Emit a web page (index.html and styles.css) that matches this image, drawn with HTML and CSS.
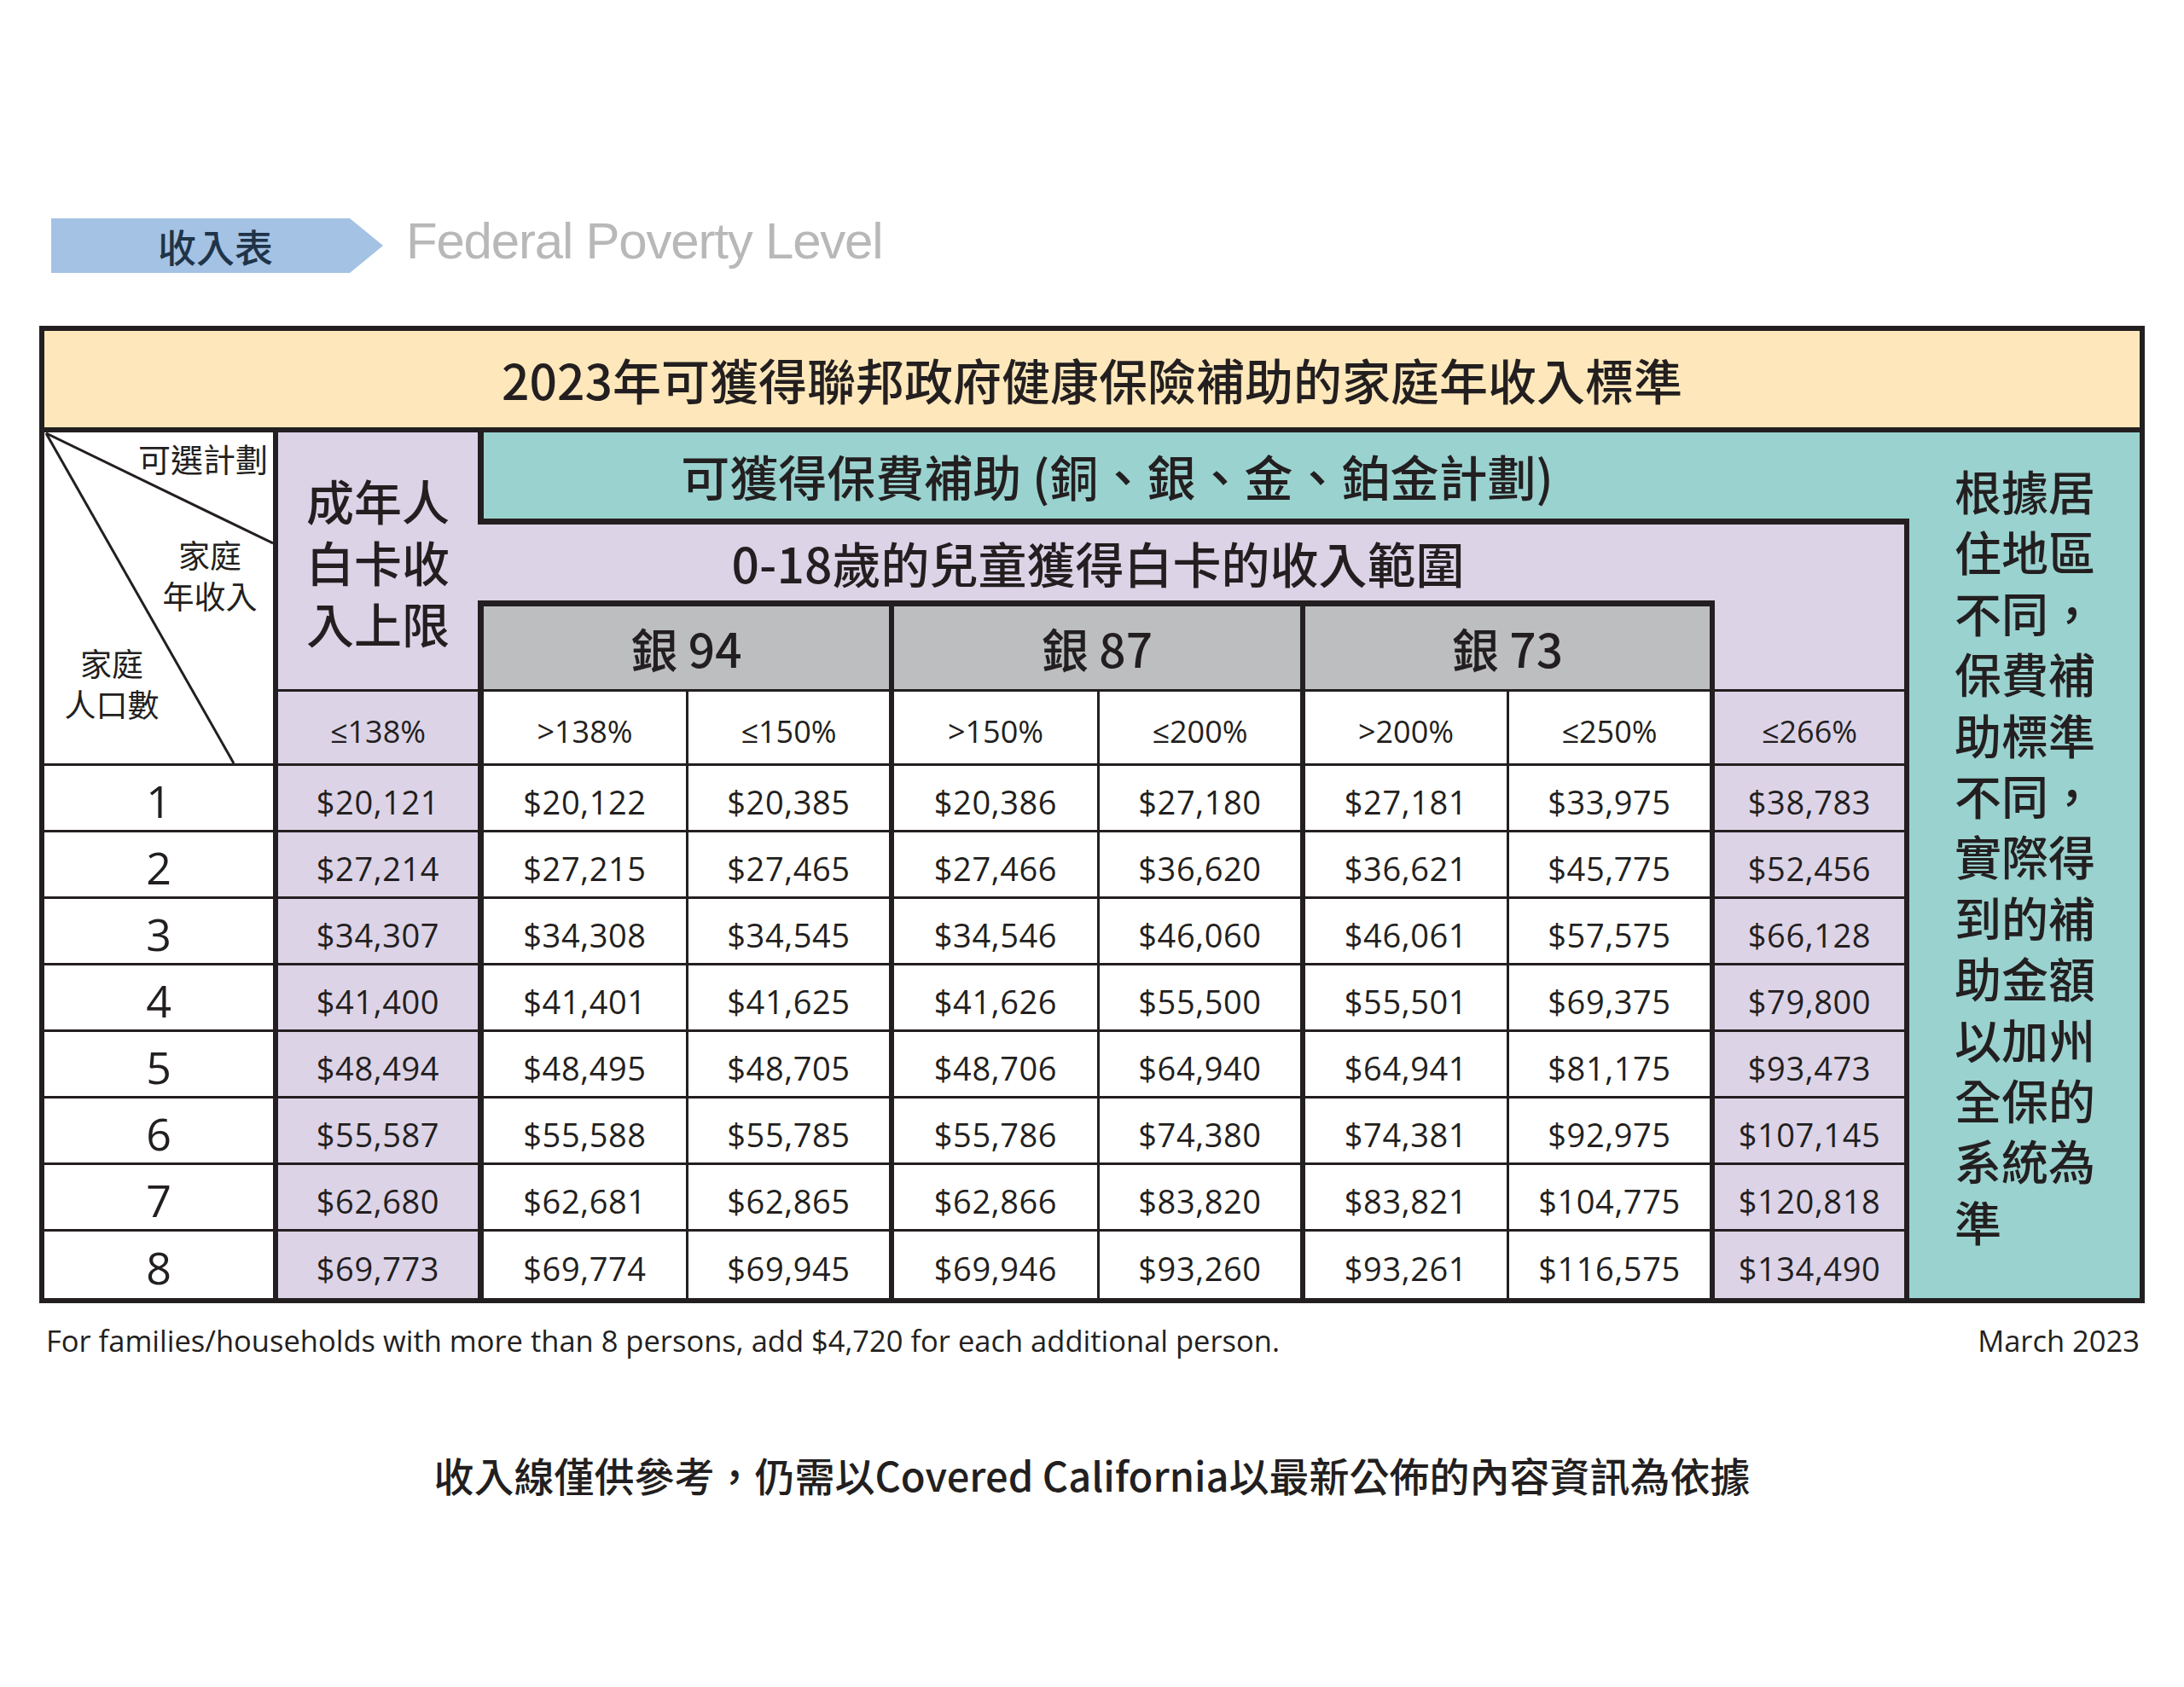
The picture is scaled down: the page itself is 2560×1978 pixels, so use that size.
FILE: index.html
```html
<!DOCTYPE html>
<html lang="zh-Hant">
<head>
<meta charset="utf-8">
<title>收入表 Federal Poverty Level</title>
<link rel="stylesheet" href="styles.css">
</head>
<body>
<div class="page">
  <div class="heading">
    <div class="tag">收入表</div>
    <div class="fpl">Federal Poverty Level</div>
  </div>

  <div class="fpl-table">
    <div class="title">2023年可獲得聯邦政府健康保險補助的家庭年收入標準</div>

    <div class="diag">
      <svg class="diag-lines" viewBox="0 0 268 388" preserveAspectRatio="none">
        <line x1="2" y1="1" x2="268" y2="130"></line>
        <line x1="2" y1="1" x2="222" y2="388"></line>
      </svg>
      <div class="lbl lbl-plan">可選計劃</div>
      <div class="lbl lbl-income">家庭<br>年收入</div>
      <div class="lbl lbl-size">家庭<br>人口數</div>
    </div>

    <div class="adult">成年人<br>白卡收<br>入上限</div>
    <div class="teal-band">可獲得保費補助 (銅、銀、金、鉑金計劃)</div>
    <div class="side">根據居<br>住地區<br>不同，<br>保費補<br>助標準<br>不同，<br>實際得<br>到的補<br>助金額<br>以加州<br>全保的<br>系統為<br>準</div>
    <div class="kids-band">0-18歲的兒童獲得白卡的收入範圍</div>
    <div class="silver s94">銀 94</div>
    <div class="silver s87">銀 87</div>
    <div class="silver s73">銀 73</div>
    <div class="kids-tail"></div>

    <div class="sub c1">≤138%</div>
    <div class="sub c2">&gt;138%</div>
    <div class="sub c3">≤150%</div>
    <div class="sub c4">&gt;150%</div>
    <div class="sub c5">≤200%</div>
    <div class="sub c6">&gt;200%</div>
    <div class="sub c7">≤250%</div>
    <div class="sub c8">≤266%</div>

    <div class="cell n">1</div><div class="cell c1">$20,121</div><div class="cell c2">$20,122</div><div class="cell c3">$20,385</div><div class="cell c4">$20,386</div><div class="cell c5">$27,180</div><div class="cell c6">$27,181</div><div class="cell c7">$33,975</div><div class="cell c8">$38,783</div>
    <div class="cell n">2</div><div class="cell c1">$27,214</div><div class="cell c2">$27,215</div><div class="cell c3">$27,465</div><div class="cell c4">$27,466</div><div class="cell c5">$36,620</div><div class="cell c6">$36,621</div><div class="cell c7">$45,775</div><div class="cell c8">$52,456</div>
    <div class="cell n">3</div><div class="cell c1">$34,307</div><div class="cell c2">$34,308</div><div class="cell c3">$34,545</div><div class="cell c4">$34,546</div><div class="cell c5">$46,060</div><div class="cell c6">$46,061</div><div class="cell c7">$57,575</div><div class="cell c8">$66,128</div>
    <div class="cell n">4</div><div class="cell c1">$41,400</div><div class="cell c2">$41,401</div><div class="cell c3">$41,625</div><div class="cell c4">$41,626</div><div class="cell c5">$55,500</div><div class="cell c6">$55,501</div><div class="cell c7">$69,375</div><div class="cell c8">$79,800</div>
    <div class="cell n">5</div><div class="cell c1">$48,494</div><div class="cell c2">$48,495</div><div class="cell c3">$48,705</div><div class="cell c4">$48,706</div><div class="cell c5">$64,940</div><div class="cell c6">$64,941</div><div class="cell c7">$81,175</div><div class="cell c8">$93,473</div>
    <div class="cell n">6</div><div class="cell c1">$55,587</div><div class="cell c2">$55,588</div><div class="cell c3">$55,785</div><div class="cell c4">$55,786</div><div class="cell c5">$74,380</div><div class="cell c6">$74,381</div><div class="cell c7">$92,975</div><div class="cell c8">$107,145</div>
    <div class="cell n">7</div><div class="cell c1">$62,680</div><div class="cell c2">$62,681</div><div class="cell c3">$62,865</div><div class="cell c4">$62,866</div><div class="cell c5">$83,820</div><div class="cell c6">$83,821</div><div class="cell c7">$104,775</div><div class="cell c8">$120,818</div>
    <div class="cell n last">8</div><div class="cell c1 last">$69,773</div><div class="cell c2 last">$69,774</div><div class="cell c3 last">$69,945</div><div class="cell c4 last">$69,946</div><div class="cell c5 last">$93,260</div><div class="cell c6 last">$93,261</div><div class="cell c7 last">$116,575</div><div class="cell c8 last">$134,490</div>
  </div>

  <div class="notes">
    <span>For families/households with more than 8 persons, add $4,720 for each additional person.</span>
    <span>March 2023</span>
  </div>

  <p class="disclaimer">收入線僅供參考，仍需以Covered California以最新公佈的內容資訊為依據</p>
</div>
</body>
</html>
```

FILE: styles.css
```css
html, body {
  margin: 0;
  padding: 0;
  background: #ffffff;
}

.page {
  width: 2560px;
  height: 1978px;
  box-sizing: border-box;
  padding: 256px 0 0 46px;
  font-family: "Noto Sans CJK TC", "Noto Sans", sans-serif;
  color: #231f20;
}

/* ---------- heading ---------- */
.heading {
  display: flex;
  align-items: center;
  height: 64px;
  margin-left: 14px;
}

.tag {
  width: 389px;
  height: 64px;
  background: #a4c2e4;
  clip-path: polygon(0 0, 350px 0, 389px 50%, 350px 100%, 0 100%);
  display: flex;
  align-items: center;
  justify-content: center;
  padding-right: 4px;
  box-sizing: border-box;
  font-size: 45px;
  font-weight: 500;
  color: #1f3449;
  line-height: 1;
}

.fpl {
  margin-left: 27px;
  margin-bottom: 11px;
  font-family: "Liberation Sans", Arial, sans-serif;
  font-size: 60px;
  letter-spacing: -1.2px;
  line-height: 1;
  color: #b8b8b8;
}

/* ---------- table ---------- */
.fpl-table {
  margin-top: 62px;
  width: max-content;
  display: grid;
  grid-template-columns: 268px 240px 244px 238px 244px 238px 242px 238px 234px 270px;
  grid-template-rows: 119px 101px 96px 104px 90px repeat(8, 78px);
  border: 6px solid #231f20;
  background: #ffffff;
}

.fpl-table > div {
  box-sizing: border-box;
}

.title {
  grid-column: 1 / -1;
  grid-row: 1;
  background: #fee8bb;
  border-bottom: 6px solid #231f20;
  display: flex;
  align-items: center;
  justify-content: center;
  font-size: 57px;
  font-weight: 500;
  line-height: 1;
}

/* diagonal header */
.diag {
  grid-column: 1;
  grid-row: 2 / 6;
  position: relative;
  background: #ffffff;
  border-bottom: 3px solid #231f20;
}

.diag-lines {
  position: absolute;
  left: 0;
  top: 0;
  width: 268px;
  height: 388px;
}

.diag-lines line {
  stroke: #231f20;
  stroke-width: 3;
}

.lbl {
  position: absolute;
  font-size: 37px;
  line-height: 48px;
  text-align: center;
  white-space: nowrap;
}

.lbl-plan {
  right: 6px;
  top: 6px;
  font-size: 38px;
}

.lbl-income {
  left: 138px;
  top: 119px;
  width: 112px;
}

.lbl-size {
  left: 23px;
  top: 246px;
  width: 112px;
}

/* adult white card column header */
.adult {
  grid-column: 2;
  grid-row: 2 / 5;
  background: #dcd3e7;
  border-left: 6px solid #231f20;
  display: flex;
  align-items: center;
  justify-content: center;
  font-size: 56px;
  font-weight: 500;
  line-height: 72px;
  text-align: center;
}

.teal-band {
  grid-column: 3 / 10;
  grid-row: 2;
  background: #9ad2cf;
  border-left: 7px solid #231f20;
  display: flex;
  align-items: center;
  justify-content: center;
  padding-right: 186px;
  font-size: 57px;
  font-weight: 500;
  line-height: 1;
  white-space: nowrap;
}

.side {
  grid-column: 10;
  grid-row: 2 / -1;
  background: #9ad2cf;
  padding: 32px 0 0 53px;
  font-size: 55px;
  font-weight: 500;
  line-height: 71.4px;
}

.kids-band {
  grid-column: 3 / 10;
  grid-row: 3;
  background: #dcd3e7;
  border-top: 7px solid #231f20;
  border-right: 6px solid #231f20;
  display: flex;
  align-items: center;
  justify-content: center;
  padding-right: 218px;
  font-size: 57px;
  font-weight: 500;
  line-height: 1;
}

.silver {
  grid-row: 4;
  background: #bcbec0;
  border-top: 7px solid #231f20;
  border-left: 6px solid #231f20;
  display: flex;
  align-items: center;
  justify-content: center;
  font-size: 55px;
  font-weight: 500;
  line-height: 1;
}

.s94 { grid-column: 3 / 5; border-left-width: 7px; }
.s87 { grid-column: 5 / 7; }
.s73 { grid-column: 7 / 9; }

.kids-tail {
  grid-column: 9;
  grid-row: 4;
  background: #dcd3e7;
  border-left: 6px solid #231f20;
  border-right: 6px solid #231f20;
}

/* percentage sub-header */
.sub {
  background: #ffffff;
  border-top: 3px solid #231f20;
  border-bottom: 3px solid #231f20;
  display: flex;
  align-items: center;
  justify-content: center;
  padding-top: 9px;
  font-family: "Open Sans", "Liberation Sans", sans-serif;
  font-size: 36px;
  line-height: 1;
}

/* data cells */
.cell {
  background: #ffffff;
  border-bottom: 3px solid #231f20;
  display: flex;
  align-items: center;
  justify-content: center;
  padding-top: 8px;
  font-family: "Open Sans", "Liberation Sans", sans-serif;
  font-size: 38px;
  letter-spacing: 0.6px;
  line-height: 1;
}

.cell.n {
  font-size: 52px;
  letter-spacing: 0;
  padding-top: 6px;
}

.cell.last {
  border-bottom: 0;
}

.c1 { background: #dcd3e7; border-left: 6px solid #231f20; }
.c2 { border-left: 7px solid #231f20; }
.c3 { border-left: 3px solid #231f20; }
.c4 { border-left: 6px solid #231f20; }
.c5 { border-left: 3px solid #231f20; }
.c6 { border-left: 6px solid #231f20; }
.c7 { border-left: 3px solid #231f20; }
.c8 { background: #dcd3e7; border-left: 6px solid #231f20; border-right: 6px solid #231f20; }

/* ---------- notes ---------- */
.notes {
  width: 2468px;
  box-sizing: border-box;
  display: flex;
  justify-content: space-between;
  margin-top: 22px;
  padding: 0 6px 0 8px;
  font-family: "Open Sans", "Liberation Sans", sans-serif;
  font-size: 34.5px;
  line-height: 44px;
}

.disclaimer {
  width: 2468px;
  margin: 105px 0 0 0;
  text-align: center;
  font-size: 47px;
  font-weight: 500;
  line-height: 60px;
}
```
